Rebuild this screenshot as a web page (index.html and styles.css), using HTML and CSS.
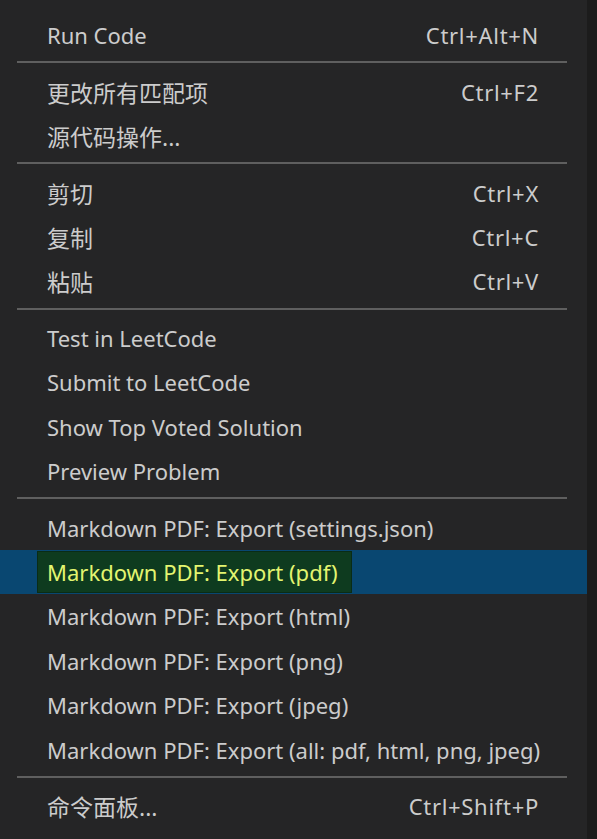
FILE: index.html
```html
<!DOCTYPE html>
<html lang="zh-CN">
<head>
    <meta charset="UTF-8">
    <meta name="viewport" content="width=device-width, initial-scale=1.0">
    <title>Context menu</title>
    <link rel="stylesheet" href="styles.css">
</head>
<body>
    <div class="menu">
        <div class="item"><span class="label">Run Code</span><span class="key">Ctrl+Alt+N</span></div>
        <div class="sep"></div>
        <div class="item"><span class="label zh">更改所有匹配项</span><span class="key">Ctrl+F2</span></div>
        <div class="item"><span class="label zh">源代码操作...</span></div>
        <div class="sep"></div>
        <div class="item"><span class="label zh">剪切</span><span class="key">Ctrl+X</span></div>
        <div class="item"><span class="label zh">复制</span><span class="key">Ctrl+C</span></div>
        <div class="item"><span class="label zh">粘贴</span><span class="key">Ctrl+V</span></div>
        <div class="sep"></div>
        <div class="item"><span class="label">Test in LeetCode</span></div>
        <div class="item"><span class="label">Submit to LeetCode</span></div>
        <div class="item"><span class="label">Show Top Voted Solution</span></div>
        <div class="item"><span class="label">Preview Problem</span></div>
        <div class="sep"></div>
        <div class="item"><span class="label">Markdown PDF: Export (settings.json)</span></div>
        <div class="item active"><span class="label mark">Markdown PDF: Export (pdf)</span></div>
        <div class="item"><span class="label">Markdown PDF: Export (html)</span></div>
        <div class="item"><span class="label">Markdown PDF: Export (png)</span></div>
        <div class="item"><span class="label">Markdown PDF: Export (jpeg)</span></div>
        <div class="item"><span class="label">Markdown PDF: Export (all: pdf, html, png, jpeg)</span></div>
        <div class="sep"></div>
        <div class="item"><span class="label zh">命令面板...</span><span class="key">Ctrl+Shift+P</span></div>
    </div>
</body>
</html>
```

FILE: styles.css
```css
body {
    margin: 0;
    background-color: #1c1c1c;
    font-family: "Noto Sans", "Noto Sans CJK SC", sans-serif;
}
.menu {
    width: 587px;
    height: 839px;
    box-sizing: border-box;
    padding-top: 13px;
    background-color: #252526; /* fundo do menu */
}
.item {
    display: flex;
    align-items: center;
    justify-content: space-between;
    height: 44.4px;
    padding: 0 48px 0 47px;
    font-size: 22px;
    color: #cccccc;
    white-space: nowrap;
}
.zh {
    font-size: 23px;
}
.key {
    letter-spacing: 0.7px;
}
.sep {
    height: 12.15px;
    box-sizing: border-box;
    padding: 4px 20px 0 17px;
}
.sep::before {
    content: "";
    display: block;
    height: 2px;
    background-color: #5f5f5f;
}
.active {
    background-color: #094771; /* item selecionado */
}
.mark {
    display: flex;
    align-items: center;
    height: 42px;
    box-sizing: border-box;
    margin-left: -10px;
    padding: 0 13px 0 9px;
    background-color: #0e3b1f;
    border: 1px solid #0a2c16;
    color: #e3f570;
}
```
